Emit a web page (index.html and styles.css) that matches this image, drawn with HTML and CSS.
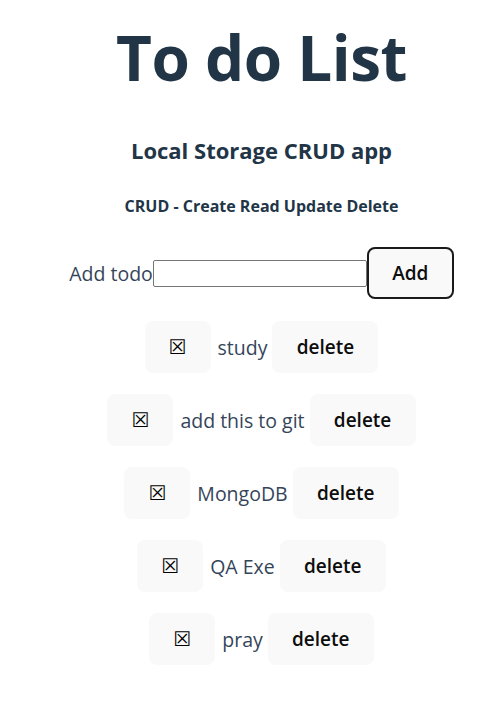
FILE: index.html
```html
<!DOCTYPE html>
<html lang="en">
<head>
<meta charset="utf-8">
<title>To do List</title>
<link rel="stylesheet" href="styles.css">
</head>
<body>
<div class="app">
  <h1 class="title">To do List</h1>
  <h3 class="subtitle">Local Storage CRUD app</h3>
  <h4 class="caption">CRUD - Create Read Update Delete</h4>
  <div class="add-row">
    <label class="add-label" for="todo">Add todo</label>
    <input class="add-input" id="todo" type="text">
    <button class="btn btn-add">Add</button>
  </div>
  <ul class="list">
    <li class="item"><button class="btn btn-check">&#9746;</button><span class="item-text">study</span><button class="btn btn-delete">delete</button></li>
    <li class="item"><button class="btn btn-check">&#9746;</button><span class="item-text">add this to git</span><button class="btn btn-delete">delete</button></li>
    <li class="item"><button class="btn btn-check">&#9746;</button><span class="item-text">MongoDB</span><button class="btn btn-delete">delete</button></li>
    <li class="item"><button class="btn btn-check">&#9746;</button><span class="item-text">QA Exe</span><button class="btn btn-delete">delete</button></li>
    <li class="item"><button class="btn btn-check">&#9746;</button><span class="item-text">pray</span><button class="btn btn-delete">delete</button></li>
  </ul>
</div>
</body>
</html>
```
FILE: styles.css
```css
* { box-sizing: border-box; }
html, body { margin: 0; padding: 0; background: #ffffff; }
body {
  font-family: "Open Sans", "Noto Sans", sans-serif;
  color: #213547;
}
.app {
  padding-left: 42px;
  display: flex;
  flex-direction: column;
  align-items: center;
}
.title {
  margin: 22px 0 0;
  font-size: 62px;
  line-height: 70px;
  font-weight: 700;
  letter-spacing: -0.5px;
}
.subtitle {
  margin: 44px 0 0;
  font-size: 22px;
  line-height: 28px;
  font-weight: 700;
}
.caption {
  margin: 32px 0 0;
  font-size: 16px;
  line-height: 20px;
  font-weight: 700;
}
.add-row {
  margin-top: 31px;
  display: flex;
  align-items: center;
}
.add-label {
  font-size: 19.5px;
  color: #34455a;
}
.add-input {
  width: 214px;
  height: 27px;
  margin: 0;
  border: 1px solid #767676;
  border-radius: 2px;
  padding: 1px 2px;
  font: inherit;
  background: #fff;
}
.btn {
  font-family: inherit;
  font-size: 19px;
  font-weight: 600;
  line-height: 28px;
  padding: 11px 22px;
  border-radius: 8px;
  border: 1px solid transparent;
  background: #f9f9f9;
  color: #0d0d0d;
  cursor: pointer;
}
.btn-add {
  border: 2px solid #1a1a1a;
  padding: 10px 21px;
  width: 87px;
  height: 52px;
}
.list {
  list-style: none;
  margin: 22px 0 0;
  padding: 0;
  display: flex;
  flex-direction: column;
  align-items: center;
  gap: 21px;
}
.item {
  display: flex;
  align-items: center;
}
.btn-check {
  width: 66px;
  height: 52px;
  padding: 0;
  font-family: "DejaVu Sans", sans-serif;
  font-size: 20px;
  font-weight: 400;
  color: #000;
}
.btn-delete {
  width: 106px;
  height: 52px;
  padding: 0;
}
.item-text {
  margin: 0 5px 0 7px;
  font-size: 19.5px;
  color: #34455a;
}
```
